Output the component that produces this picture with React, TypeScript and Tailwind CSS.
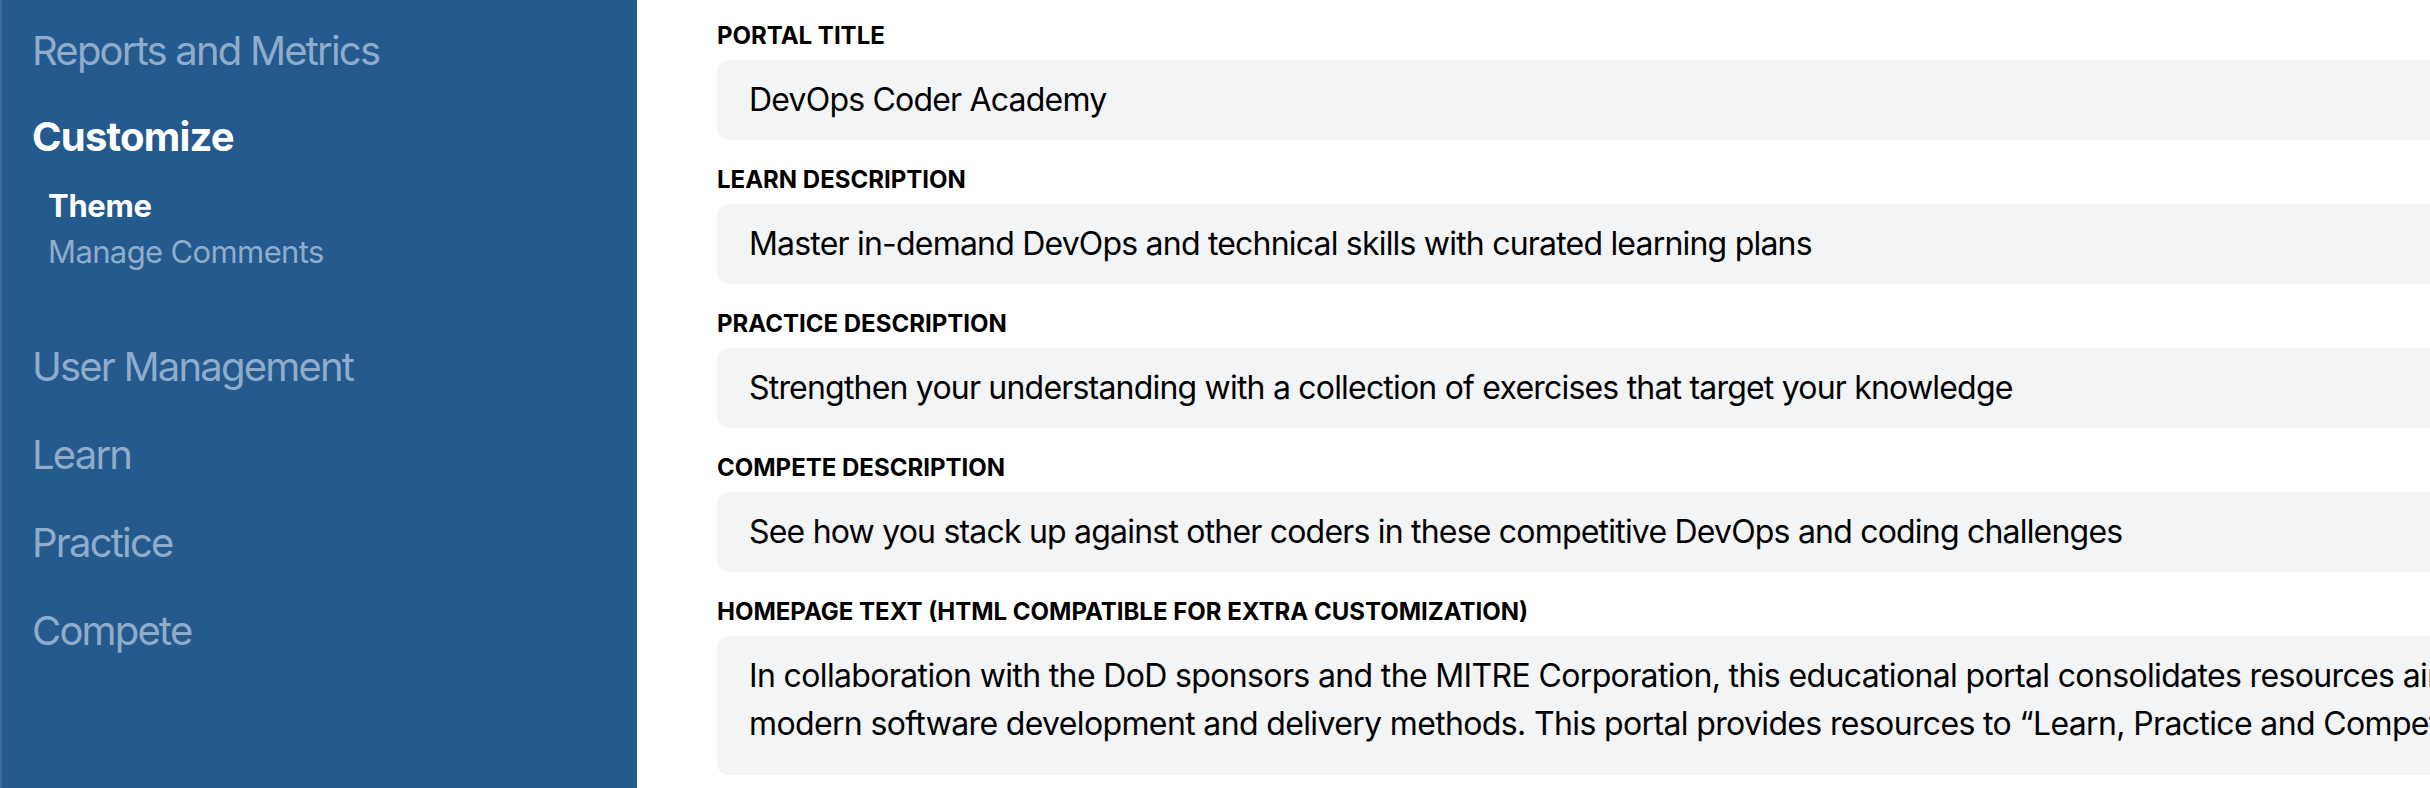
import React from 'react';

const navItem = 'block text-[40px] leading-[48px]';
const subItem = 'block text-[31px] leading-[46px]';
const labelCls = 'block text-[24px] leading-8 font-bold uppercase tracking-normal text-black';

interface FieldProps {
  label: string;
  value: string;
}

const Field: React.FC<FieldProps> = ({ label, value }) => {
  return (
    <div className="mb-6">
      <label className={labelCls}>{label}</label>
      <div className="mt-2 h-20 w-[1900px] rounded-xl bg-[#f3f4f6] px-8 text-[32px] leading-[80px] tracking-[-0.025em] text-black whitespace-nowrap">
        {value}
      </div>
    </div>
  );
};

const App: React.FC = () => {
  return (
    <div className="flex h-[788px] w-full overflow-hidden bg-white font-['Inter','Noto_Sans',sans-serif]">
      <aside className="h-full w-[637px] shrink-0 border-l-2 border-[#3d6c9b] bg-[#245a8e] pl-[30px] pt-[27px]">
        <nav className="flex flex-col">
          <a className={`${navItem} tracking-[-0.045em] text-[#8fadcb]`}>Reports and Metrics</a>
          <a className={`${navItem} mt-[38px] font-bold tracking-[-0.02em] text-white`}>Customize</a>
          <div className="mt-[22px] pl-4">
            <a className={`${subItem} font-bold tracking-[-0.01em] text-white`}>Theme</a>
            <a className={`${subItem} tracking-[-0.02em] text-[#8fadcb]`}>Manage Comments</a>
          </div>
          <a className={`${navItem} mt-[68px] tracking-[-0.045em] text-[#8fadcb]`}>User Management</a>
          <a className={`${navItem} mt-10 tracking-[-0.045em] text-[#8fadcb]`}>Learn</a>
          <a className={`${navItem} mt-10 tracking-[-0.045em] text-[#8fadcb]`}>Practice</a>
          <a className={`${navItem} mt-10 tracking-[-0.045em] text-[#8fadcb]`}>Compete</a>
        </nav>
      </aside>

      <main className="min-w-0 flex-1 overflow-hidden pl-20 pt-5">
        <Field label="Portal Title" value="DevOps Coder Academy" />
        <Field
          label="Learn Description"
          value="Master in-demand DevOps and technical skills with curated learning plans"
        />
        <Field
          label="Practice Description"
          value="Strengthen your understanding with a collection of exercises that target your knowledge"
        />
        <Field
          label="Compete Description"
          value="See how you stack up against other coders in these competitive DevOps and coding challenges"
        />
        <div>
          <label className={labelCls}>Homepage Text (HTML Compatible for Extra Customization)</label>
          <div className="mt-2 h-[139px] w-[1900px] rounded-xl bg-[#f3f4f6] px-8 pt-4 text-[32px] leading-[48px] tracking-[-0.02em] text-black whitespace-nowrap">
            <p>
              In collaboration with the DoD sponsors and the MITRE Corporation, this educational portal consolidates resources aimed at
            </p>
            <p>
              modern software development and delivery methods. This portal provides resources to “Learn, Practice and Compete” in
            </p>
          </div>
        </div>
      </main>
    </div>
  );
};

export default App;
